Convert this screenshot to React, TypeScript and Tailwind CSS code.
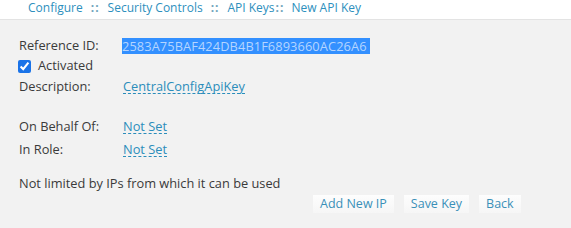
import React from "react";

const font = { fontFamily: '"Open Sans", "Liberation Sans", sans-serif' };

function Sep({ cls = "mx-[8px]" }: { cls?: string }) {
  return <span className={`text-[#6fa3bb] font-bold tracking-[1px] ${cls}`}>::</span>;
}

function Row({ label, children, mt }: { label: string; children: React.ReactNode; mt: string }) {
  return (
    <div className={`flex items-center h-[20px] ${mt}`}>
      <div className="w-[104px] shrink-0 text-[#3a3a3a]">{label}</div>
      <div>{children}</div>
    </div>
  );
}

function Link({ children }: { children: React.ReactNode }) {
  return (
    <span className="text-[#2b8dbb] border-b border-dashed border-[#2b8dbb] leading-[14px] inline-block">
      {children}
    </span>
  );
}

function Btn({ children }: { children: React.ReactNode }) {
  return (
    <button className="h-[18px] px-[7px] bg-gradient-to-b from-[#fdfdfd] to-[#f6f6f6] text-[#3a90b8] text-[12.5px] leading-[18px]">
      {children}
    </button>
  );
}

export default function App() {
  return (
    <div className="w-[571px] h-[228px] bg-[#f2f2f2] overflow-hidden text-[12.8px]" style={font}>
      <div className="h-[20px] bg-white border-b border-[#e3e3e3] pl-[28px] pt-[1px] leading-[13px] text-[12px] text-[#2d8fbd] whitespace-nowrap">
        <span>Configure</span>
        <Sep />
        <span>Security Controls</span>
        <Sep />
        <span>API Keys</span>
        <Sep cls="ml-[1px] mr-[7px]" />
        <span>New API Key</span>
      </div>
      <div className="pl-[19px] pt-[16px]">
        <Row label="Reference ID:" mt="mt-0">
          <span className="block ml-[-1px] w-[248px] h-[16px] bg-[#3390ff] text-[#b5d5ff] leading-[16px] overflow-hidden whitespace-nowrap tracking-[0.1px]">
            2583A75BAF424DB4B1F6893660AC26A6
          </span>
        </Row>
        <div className="flex items-center h-[20px] mt-0">
          <input type="checkbox" checked readOnly className="w-[13px] h-[13px] m-0 ml-[-1px] accent-[#1a73e8]" />
          <span className="ml-[7px] text-[#3a3a3a]">Activated</span>
        </div>
        <Row label="Description:" mt="mt-[1px]">
          <Link>CentralConfigApiKey</Link>
        </Row>
        <Row label="On Behalf Of:" mt="mt-[20px]">
          <Link>Not Set</Link>
        </Row>
        <Row label="In Role:" mt="mt-[3px]">
          <Link>Not Set</Link>
        </Row>
        <div className="h-[20px] mt-[14px] flex items-center text-[#3a3a3a]">
          Not limited by IPs from which it can be used
        </div>
        <div className="flex gap-[10px] mt-[1px] pl-[294px]">
          <Btn>Add New IP</Btn>
          <Btn>Save Key</Btn>
          <Btn>Back</Btn>
        </div>
      </div>
    </div>
  );
}
